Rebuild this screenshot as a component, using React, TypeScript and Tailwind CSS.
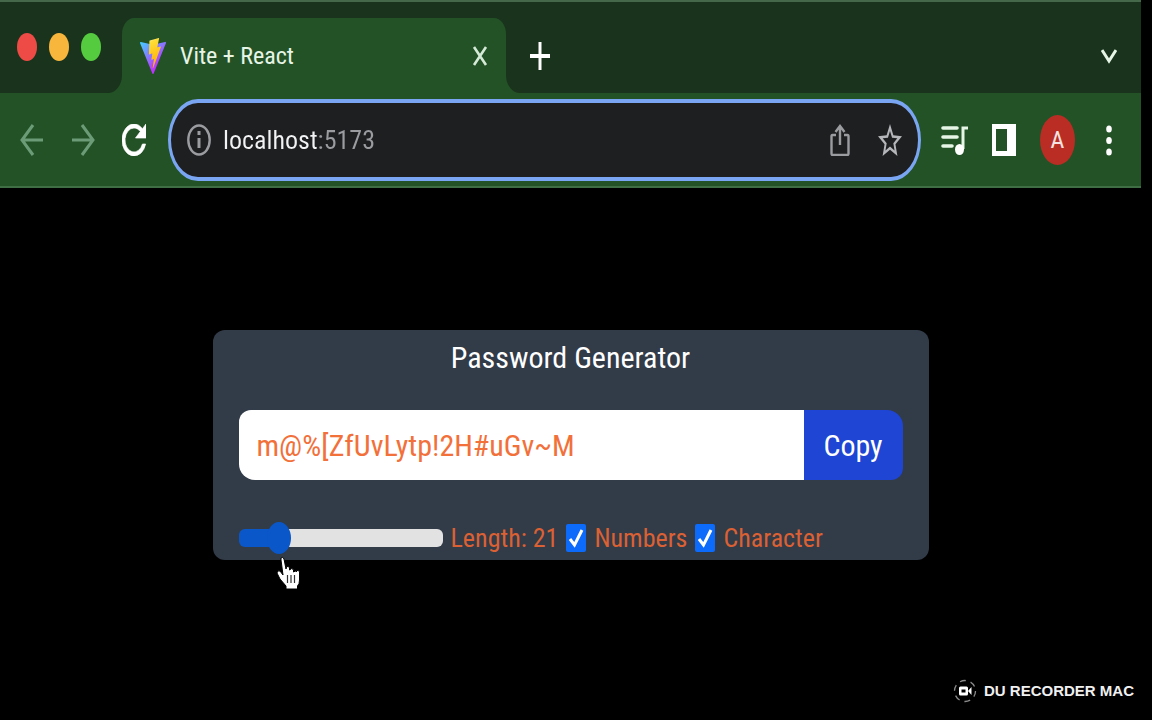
import { useRef, useState } from "react";

const LENGTH_MIN = 6;
const LENGTH_MAX = 100;

const BrowserTabs = () => {
  return (
    <div className="flex border-t-2 border-[#46684a] bg-[#235226]">
      <div className="flex w-[122px] items-center gap-3 rounded-br-[14px_18px] bg-[#1a331c] pb-0.5 pl-[17px]">
        <button title="Close" className="h-7 w-5 rounded-[50%] bg-[#ee4b47]" />
        <button title="Minimize" className="h-7 w-5 rounded-[50%] bg-[#f8b63c]" />
        <button title="Zoom" className="h-7 w-5 rounded-[50%] bg-[#55cb3f]" />
      </div>

      <div className="w-96 bg-[#1a331c] pt-4">
        <div className="flex h-[75px] items-center rounded-t-[12px_16px] bg-[#235226] px-[18px]">
          <svg
            className="h-9 w-[26px]"
            viewBox="0 0 256 257"
            preserveAspectRatio="none"
            aria-hidden="true"
          >
            <defs>
              <linearGradient id="shield" x1="0" y1="0" x2="0.6" y2="0.8">
                <stop offset="0" stopColor="#41d1ff" />
                <stop offset="1" stopColor="#bd34fe" />
              </linearGradient>
              <linearGradient id="bolt" x1="0.4" y1="0" x2="0.6" y2="1">
                <stop offset="0" stopColor="#ffea83" />
                <stop offset="0.1" stopColor="#ffdd35" />
                <stop offset="1" stopColor="#ffa800" />
              </linearGradient>
            </defs>
            <path
              fill="url(#shield)"
              d="M255 38 134 253a7 7 0 0 1-12 0L1 38a7 7 0 0 1 7-10l120 21 118-21a7 7 0 0 1 9 10Z"
            />
            <path
              fill="url(#bolt)"
              d="M185 0 96 18a3 3 0 0 0-3 3l-5 93a3 3 0 0 0 4 3l25-6a3 3 0 0 1 4 4l-8 36a3 3 0 0 0 4 4l16-5a3 3 0 0 1 4 4l-12 57c-1 4 4 6 6 2l73-147a3 3 0 0 0-3-5l-26 5a3 3 0 0 1-4-4l17-58a3 3 0 0 0-3-4Z"
            />
          </svg>
          <span className="ml-3.5 flex-1 text-[24px] leading-8 text-[#e6f5e6]">
            Vite + React
          </span>
          <button title="Close tab">
            <svg
              className="h-5 w-4"
              viewBox="0 0 16 20"
              fill="none"
              stroke="#d5ead6"
              strokeWidth="2.6"
              aria-hidden="true"
            >
              <path d="M2 1 14 19M14 1 2 19" />
            </svg>
          </button>
        </div>
      </div>

      <div className="flex flex-1 items-center justify-between rounded-bl-[14px_18px] bg-[#1a331c] px-6 pt-4">
        <button title="New tab">
          <svg
            className="h-7 w-5"
            viewBox="0 0 20 28"
            fill="none"
            stroke="#ffffff"
            aria-hidden="true"
          >
            <path strokeWidth="4" d="M0 14h20" />
            <path strokeWidth="3" d="M10 0v28" />
          </svg>
        </button>
        <button title="Search tabs">
          <svg
            className="h-4 w-4"
            viewBox="0 0 16 16"
            fill="none"
            stroke="#e6f5e6"
            strokeWidth="3"
            aria-hidden="true"
          >
            <path d="M1 2 8 13 15 2" />
          </svg>
        </button>
      </div>
    </div>
  );
};

const AddressBar = () => {
  const [url, setUrl] = useState("localhost:5173");

  return (
    <div className="flex h-[95px] items-center border-b-2 border-[#3f6e45] bg-[#235226] pl-5 pr-[26px]">
      <div className="flex gap-[27px]">
        <button title="Back">
          <svg
            className="h-8 w-6"
            viewBox="0 0 24 32"
            fill="none"
            stroke="#6c9c77"
            strokeWidth="3"
            aria-hidden="true"
          >
            <path d="M23 16H2M13 1 2 16l11 15" />
          </svg>
        </button>
        <button title="Forward">
          <svg
            className="h-8 w-6"
            viewBox="0 0 24 32"
            fill="none"
            stroke="#6c9c77"
            strokeWidth="3"
            aria-hidden="true"
          >
            <path d="M1 16h21M11 1l11 15-11 15" />
          </svg>
        </button>
        <button title="Reload">
          <svg
            className="h-8 w-6"
            viewBox="4 4 16 16"
            preserveAspectRatio="none"
            fill="#ffffff"
            stroke="#ffffff"
            strokeWidth="0.4"
            aria-hidden="true"
          >
            <path d="M17.65 6.35A7.96 7.96 0 0 0 12 4a8 8 0 1 0 7.73 10h-2.08A6 6 0 1 1 12 6c1.66 0 3.14.69 4.22 1.78L13 11h7V4l-2.35 2.35Z" />
          </svg>
        </button>
      </div>

      <div className="ml-[22px] flex h-[82px] flex-1 items-center rounded-[30px/41px] border-4 border-x-3 border-[#7aa5f2] bg-[#1e1f21] px-4">
        <svg
          className="h-8 w-6"
          viewBox="0 0 24 32"
          fill="none"
          stroke="#9a9ca0"
          aria-hidden="true"
        >
          <ellipse cx="12" cy="16" rx="10.7" ry="14.5" strokeWidth="2.4" />
          <path strokeWidth="3" d="M12 14v10M12 7v4" />
        </svg>
        <input
          type="text"
          aria-label="Address"
          value={url}
          onChange={(e) => setUrl(e.target.value)}
          className="ml-3 min-w-0 flex-1 bg-[linear-gradient(to_right,#f1f3f4_95px,#9a9ca0_95px)] bg-clip-text text-[26px] leading-9 text-transparent caret-white outline-none"
        />
        <button title="Share">
          <svg
            className="h-8 w-5"
            viewBox="0 0 20 32"
            fill="none"
            stroke="#9a9ca0"
            strokeWidth="2.4"
            aria-hidden="true"
          >
            <path d="M6 11H2.500q-1 0-1 1.500v17q0 1.500 1 1.500h15q1 0 1-1.500v-17q0-1.500-1-1.500H14M10 21V3M5.500 8 10 2l4.500 6" />
          </svg>
        </button>
        <button title="Bookmark" className="ml-7">
          <svg
            className="h-8 w-6"
            viewBox="2 2 20 19"
            preserveAspectRatio="none"
            fill="#b4b6b9"
            aria-hidden="true"
          >
            <path d="m22 9.240-7.190-.620L12 2 9.190 8.630 2 9.240l5.460 4.730L5.820 21 12 17.270 18.180 21l-1.630-7.030L22 9.240ZM12 15.400l-3.760 2.270 1-4.280-3.320-2.880 4.380-.380L12 6.100l1.710 4.040 4.380.380-3.320 2.880 1 4.280L12 15.400Z" />
          </svg>
        </button>
      </div>

      <div className="ml-5 flex items-center gap-6">
        <button title="Media controls">
          <svg
            className="h-8 w-[27px]"
            viewBox="0 0 27 32"
            fill="none"
            stroke="#e6f5e6"
            strokeWidth="3.6"
            strokeLinecap="round"
            aria-hidden="true"
          >
            <path d="M2 4h14M2 13h14M2 22h9" />
            <path strokeWidth="3" strokeLinecap="butt" d="M22 25V4h5" />
            <ellipse cx="18.500" cy="25.500" rx="4.500" ry="5.500" fill="#ffffff" stroke="none" />
          </svg>
        </button>
        <button title="Side panel">
          <svg className="h-8 w-6" viewBox="0 0 24 32" aria-hidden="true">
            <path
              fill="#ffffff"
              fillRule="evenodd"
              d="M0 0h24v32H0ZM4 5v22h11V5Z"
            />
          </svg>
        </button>
        <button
          title="Profile"
          className="h-[50px] w-[35px] rounded-[50%] bg-[#b92d24] text-[24px] text-[#f7e3e1]"
        >
          A
        </button>
        <button title="Menu" className="ml-1">
          <svg
            className="h-8 w-3"
            viewBox="0 0 12 32"
            fill="#ffffff"
            aria-hidden="true"
          >
            <ellipse cx="6" cy="5" rx="2.800" ry="3.600" />
            <ellipse cx="6" cy="16.500" rx="2.800" ry="3.600" />
            <ellipse cx="6" cy="28" rx="2.800" ry="3.600" />
          </svg>
        </button>
      </div>
    </div>
  );
};

type CheckOptionProps = {
  id: string;
  label: string;
  checked: boolean;
  onChange: (checked: boolean) => void;
};

const CheckOption: React.FC<CheckOptionProps> = ({
  id,
  label,
  checked,
  onChange,
}) => {
  return (
    <div className="flex items-center gap-2">
      <div className="grid">
        <input
          type="checkbox"
          id={id}
          checked={checked}
          onChange={(e) => onChange(e.target.checked)}
          className="col-start-1 row-start-1 h-7 w-5 appearance-none rounded-xs bg-white checked:bg-[#0d6bfb]"
        />
        {checked && (
          <svg
            className="pointer-events-none col-start-1 row-start-1 h-7 w-5"
            viewBox="0 0 20 28"
            fill="none"
            stroke="#ffffff"
            strokeWidth="3"
            aria-hidden="true"
          >
            <path d="M4 15l4.500 6L16 6" />
          </svg>
        )}
      </div>
      <label htmlFor={id}>{label}</label>
    </div>
  );
};

const PasswordGenerator = () => {
  const [password] = useState("m@%[ZfUvLytp!2H#uGv~M");
  const [length, setLength] = useState(21);
  const [numbers, setNumbers] = useState(true);
  const [characters, setCharacters] = useState(true);
  const passwordRef = useRef<HTMLInputElement>(null);

  const filled = ((length - LENGTH_MIN) / (LENGTH_MAX - LENGTH_MIN)) * 100;

  const copyPassword = () => {
    passwordRef.current?.select();
    navigator.clipboard?.writeText(password);
  };

  return (
    <div className="relative mx-auto w-full max-w-[716px] rounded-[12px] bg-[#323b48] px-[26px]">
      <h1 className="py-2 text-center text-[30px] leading-10 text-white">
        Password Generator
      </h1>
      <div className="mt-6 flex h-[70px] overflow-hidden rounded-[12px_16px]">
        <input
          type="text"
          aria-label="Password"
          ref={passwordRef}
          value={password}
          readOnly
          className="min-w-0 flex-1 bg-white px-[18px] text-[30px] text-[#f2703a] outline-none"
        />
        <button
          onClick={copyPassword}
          className="w-[99px] bg-[#1e45d3] text-[30px] text-white"
        >
          Copy
        </button>
      </div>
      <div className="mt-[38px] flex items-center gap-2 pb-0.5 text-[26px] leading-10 text-[#db6134]">
        <input
          type="range"
          id="length"
          min={LENGTH_MIN}
          max={LENGTH_MAX}
          value={length}
          onChange={(e) => setLength(Number(e.target.value))}
          style={{
            backgroundImage: `linear-gradient(to right, #0a57c9 ${filled}%, #e2e2e2 ${filled}%)`,
          }}
          className="h-[18px] w-[204px] appearance-none rounded-[6px] [&::-webkit-slider-thumb]:h-8 [&::-webkit-slider-thumb]:w-6 [&::-webkit-slider-thumb]:appearance-none [&::-webkit-slider-thumb]:rounded-[50%] [&::-webkit-slider-thumb]:bg-[#0a57c9]"
        />
        <label htmlFor="length">Length: {length}</label>
        <CheckOption
          id="numbers"
          label="Numbers"
          checked={numbers}
          onChange={setNumbers}
        />
        <CheckOption
          id="characters"
          label="Character"
          checked={characters}
          onChange={setCharacters}
        />
      </div>

      {/* pointer over the slider thumb */}
      <svg
        className="pointer-events-none absolute left-[63px] top-[224px] h-9 w-6"
        viewBox="0 0 24 36"
        aria-hidden="true"
      >
        <path
          fill="#ffffff"
          stroke="#000000"
          strokeWidth="1"
          d="M5 4q2-2 3 1l2 10 .5-2q2-2 3 1v2q2.500-3 4 0v2q2.500-2 3 0v-1q2-2 3 1v8q0 4-2 6v3H10v-3l-6-7-3-6q0-3 3-2l3 4L5 6Z"
        />
        <path stroke="#333333" strokeWidth="1.200" d="M11.500 21v8M15 21v8M18.500 21v8" />
      </svg>
    </div>
  );
};

function App() {
  return (
    <div className="relative min-h-screen bg-black pr-[11px] font-['Roboto_Condensed',Roboto,sans-serif]">
      <BrowserTabs />
      <AddressBar />
      <main className="pt-[142px]">
        <PasswordGenerator />
      </main>

      {/* recorder watermark */}
      <div className="absolute bottom-[17px] right-[18px] flex items-center gap-[7px] font-['Liberation_Sans',sans-serif] text-[15px] font-bold leading-6 text-[#f0f0f0]">
        <svg className="h-6 w-6" viewBox="0 0 24 24" fill="none" aria-hidden="true">
          <circle
            cx="12"
            cy="12"
            r="10.500"
            stroke="#8a8a8a"
            strokeWidth="1.300"
            strokeDasharray="6 5"
          />
          <rect x="6" y="7.500" width="9" height="9" rx="1.500" fill="#ffffff" />
          <rect x="8.500" y="10.500" width="4" height="3" fill="#000000" />
          <path fill="#ffffff" d="m15 12 3.500-4v8Z" />
        </svg>
        DU RECORDER MAC
      </div>
    </div>
  );
}

export default App;
